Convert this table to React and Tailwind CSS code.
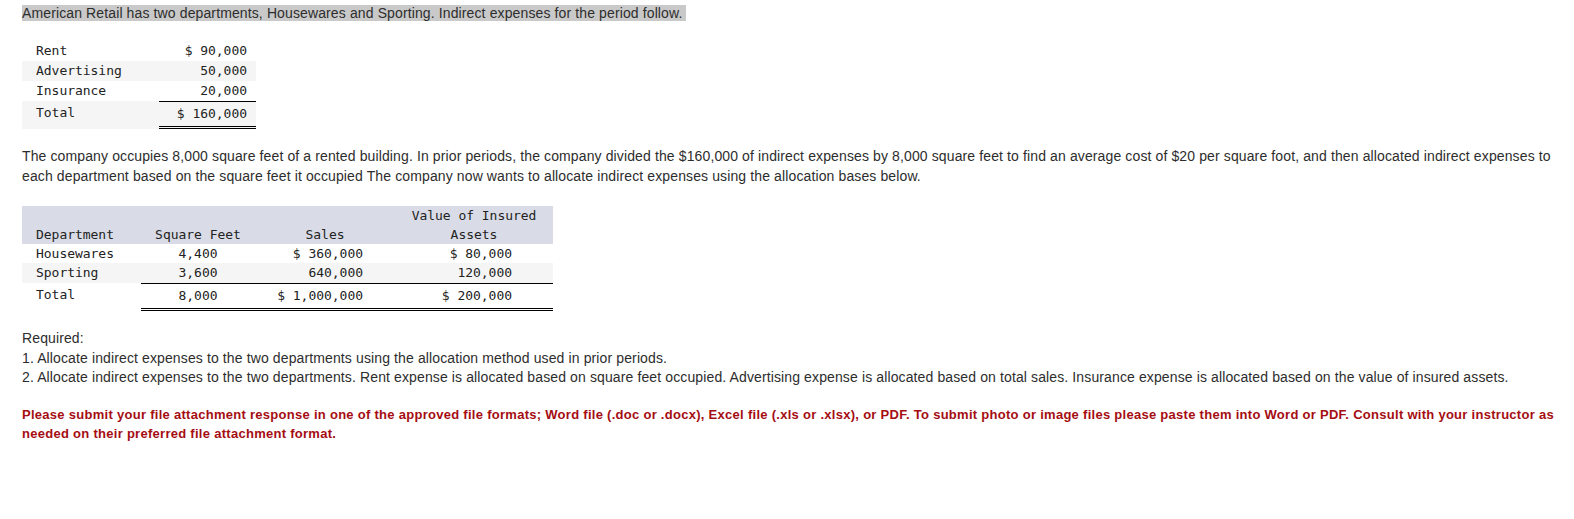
import React from 'react';

const sans = { fontFamily: '"Liberation Sans", Arial, sans-serif' };

const expenses = [
  { label: 'Rent', value: '$ 90,000' },
  { label: 'Advertising', value: '50,000' },
  { label: 'Insurance', value: '20,000' },
];

const departments = [
  { name: 'Housewares', sqft: '4,400', sales: '$ 360,000', assets: '$ 80,000' },
  { name: 'Sporting', sqft: '3,600', sales: '640,000', assets: '120,000' },
];

function ExpenseTable() {
  return (
    <div className="ml-[22px] mt-[18px] w-[234px] font-['DejaVu_Sans_Mono',monospace] text-[13px] tracking-[-0.03px] text-[#222]">
      {expenses.map((row, i) => (
        <div key={row.label} className={`flex h-[20px] items-center ${i === 1 ? 'bg-[#f5f5f5]' : ''}`}>
          <div className="w-[137px] pl-[14px]">{row.label}</div>
          <div className="flex h-full w-[97px] items-center justify-end pr-[9px]">{row.value}</div>
        </div>
      ))}
      <div className="flex bg-[#f5f5f5]">
        <div className="flex h-[24px] w-[137px] items-center pl-[14px]">Total</div>
        <div className="flex h-[28px] w-[97px] items-center justify-end border-double border-t border-b-[3px] border-black pr-[9px]">
          $ 160,000
        </div>
      </div>
    </div>
  );
}

function AllocationTable() {
  return (
    <div className="ml-[22px] mt-[20px] w-[531px] font-['DejaVu_Sans_Mono',monospace] text-[13px] tracking-[-0.03px] text-[#222]">
      <div className="grid h-[38px] grid-cols-[119px_114px_140px_158px] items-end bg-[#d9dce6] leading-[19px]">
        <div className="pl-[14px]">Department</div>
        <div className="text-center">Square Feet</div>
        <div className="text-center">Sales</div>
        <div className="text-center">
          Value of Insured
          <br />
          Assets
        </div>
      </div>
      {departments.map((d, i) => (
        <div
          key={d.name}
          className={`grid grid-cols-[119px_114px_140px_158px] items-center ${i === 1 ? 'h-[20px] bg-[#f5f5f5]' : 'h-[19px]'}`}
        >
          <div className="pl-[14px]">{d.name}</div>
          <div className="text-center">{d.sqft}</div>
          <div className="pr-[32px] text-right">{d.sales}</div>
          <div className="pr-[41px] text-right">{d.assets}</div>
        </div>
      ))}
      <div className="flex">
        <div className="flex h-[24px] w-[119px] items-center pl-[14px]">Total</div>
        <div className="grid h-[28px] w-[412px] grid-cols-[114px_140px_158px] items-center border-double border-t border-b-[3px] border-black">
          <div className="text-center">8,000</div>
          <div className="pr-[32px] text-right">$ 1,000,000</div>
          <div className="pr-[41px] text-right">$ 200,000</div>
        </div>
      </div>
    </div>
  );
}

export default function App() {
  return (
    <div className="min-h-[519px] w-[1574px] bg-white pt-[4px] text-[#2d2d2d]" style={sans}>
      <div className="pl-[22px] text-[14px] leading-[19px] tracking-[0.12px]">
        <span className="bg-[#c9c9c9] pr-[4px]">
          American Retail has two departments, Housewares and Sporting. Indirect expenses for the period follow.
        </span>
      </div>

      <ExpenseTable />

      <p className="mt-[17px] w-[1560px] pl-[22px] text-[14px] leading-[20px] tracking-[0.12px]">
        The company occupies 8,000 square feet of a rented building. In prior periods, the company divided the $160,000 of
        indirect expenses by 8,000 square feet to find an average cost of $20 per square foot, and then allocated indirect
        expenses to
        <br />
        each department based on the square feet it occupied The company now wants to allocate indirect expenses using the
        allocation bases below.
      </p>

      <AllocationTable />

      <div className="mt-[18px] w-[1560px] pl-[22px] text-[14px] leading-[19.5px] tracking-[0.12px]">
        <p>Required:</p>
        <p>1. Allocate indirect expenses to the two departments using the allocation method used in prior periods.</p>
        <p>
          2. Allocate indirect expenses to the two departments. Rent expense is allocated based on square feet occupied.
          Advertising expense is allocated based on total sales. Insurance expense is allocated based on the value of insured
          assets.
        </p>
      </div>

      <p className="mt-[17px] w-[1560px] pl-[22px] text-[13px] font-bold leading-[19px] tracking-[0.28px] text-[#a50d12]">
        Please submit your file attachment response in one of the approved file formats; Word file (.doc or .docx), Excel file
        (.xls or .xlsx), or PDF. To submit photo or image files please paste them into Word or PDF. Consult with your
        instructor as
        <br />
        needed on their preferred file attachment format.
      </p>
    </div>
  );
}
